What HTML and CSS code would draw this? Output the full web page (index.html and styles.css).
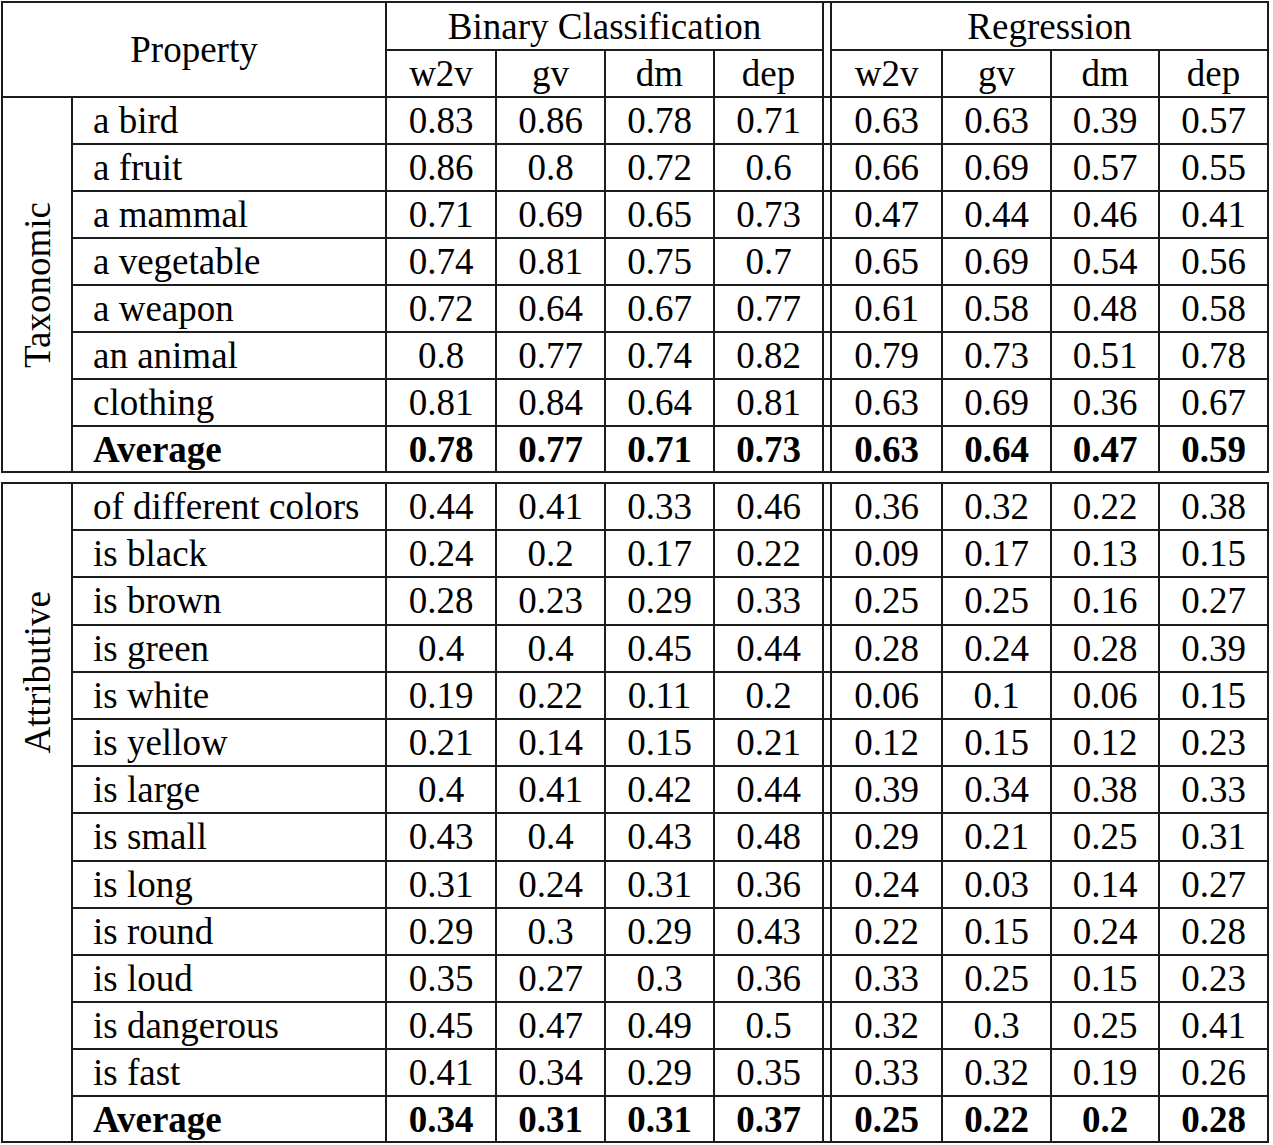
FILE: index.html
```html
<!DOCTYPE html>
<html lang="en">
<head>
<meta charset="utf-8">
<title>Property table</title>
<link rel="stylesheet" href="styles.css">
</head>
<body>
<div class="page">
<table class="tbl">
  <colgroup>
    <col class="c-grp"><col class="c-name">
    <col class="c-a1"><col class="c-a2"><col class="c-a3"><col class="c-a4">
    <col class="c-sep">
    <col class="c-b1"><col class="c-b2"><col class="c-b3"><col class="c-b4">
  </colgroup>
  <tr class="h1">
    <th colspan="2" rowspan="2">Property</th>
    <th colspan="4">Binary Classification</th>
    <td class="sep" rowspan="2"></td>
    <th colspan="4">Regression</th>
  </tr>
  <tr class="h2">
    <th>w2v</th><th>gv</th><th>dm</th><th>dep</th>
    <th>w2v</th><th>gv</th><th>dm</th><th>dep</th>
  </tr>
  <tr>
    <td class="grp" rowspan="8"><div class="vlabel">Taxonomic</div></td>
    <td class="name">a bird</td><td>0.83</td><td>0.86</td><td>0.78</td><td>0.71</td><td class="sep"></td><td>0.63</td><td>0.63</td><td>0.39</td><td>0.57</td>
  </tr>
  <tr><td class="name">a fruit</td><td>0.86</td><td>0.8</td><td>0.72</td><td>0.6</td><td class="sep"></td><td>0.66</td><td>0.69</td><td>0.57</td><td>0.55</td></tr>
  <tr><td class="name">a mammal</td><td>0.71</td><td>0.69</td><td>0.65</td><td>0.73</td><td class="sep"></td><td>0.47</td><td>0.44</td><td>0.46</td><td>0.41</td></tr>
  <tr><td class="name">a vegetable</td><td>0.74</td><td>0.81</td><td>0.75</td><td>0.7</td><td class="sep"></td><td>0.65</td><td>0.69</td><td>0.54</td><td>0.56</td></tr>
  <tr><td class="name">a weapon</td><td>0.72</td><td>0.64</td><td>0.67</td><td>0.77</td><td class="sep"></td><td>0.61</td><td>0.58</td><td>0.48</td><td>0.58</td></tr>
  <tr><td class="name">an animal</td><td>0.8</td><td>0.77</td><td>0.74</td><td>0.82</td><td class="sep"></td><td>0.79</td><td>0.73</td><td>0.51</td><td>0.78</td></tr>
  <tr><td class="name">clothing</td><td>0.81</td><td>0.84</td><td>0.64</td><td>0.81</td><td class="sep"></td><td>0.63</td><td>0.69</td><td>0.36</td><td>0.67</td></tr>
  <tr class="avg avg1"><td class="name">Average</td><td>0.78</td><td>0.77</td><td>0.71</td><td>0.73</td><td class="sep"></td><td>0.63</td><td>0.64</td><td>0.47</td><td>0.59</td></tr>
</table>

<table class="tbl second">
  <colgroup>
    <col class="c-grp"><col class="c-name">
    <col class="c-a1"><col class="c-a2"><col class="c-a3"><col class="c-a4">
    <col class="c-sep">
    <col class="c-b1"><col class="c-b2"><col class="c-b3"><col class="c-b4">
  </colgroup>
  <tr>
    <td class="grp top" rowspan="14"><div class="vbox"><div class="vlabel">Attributive</div></div></td>
    <td class="name">of different colors</td><td>0.44</td><td>0.41</td><td>0.33</td><td>0.46</td><td class="sep"></td><td>0.36</td><td>0.32</td><td>0.22</td><td>0.38</td>
  </tr>
  <tr><td class="name">is black</td><td>0.24</td><td>0.2</td><td>0.17</td><td>0.22</td><td class="sep"></td><td>0.09</td><td>0.17</td><td>0.13</td><td>0.15</td></tr>
  <tr><td class="name">is brown</td><td>0.28</td><td>0.23</td><td>0.29</td><td>0.33</td><td class="sep"></td><td>0.25</td><td>0.25</td><td>0.16</td><td>0.27</td></tr>
  <tr><td class="name">is green</td><td>0.4</td><td>0.4</td><td>0.45</td><td>0.44</td><td class="sep"></td><td>0.28</td><td>0.24</td><td>0.28</td><td>0.39</td></tr>
  <tr><td class="name">is white</td><td>0.19</td><td>0.22</td><td>0.11</td><td>0.2</td><td class="sep"></td><td>0.06</td><td>0.1</td><td>0.06</td><td>0.15</td></tr>
  <tr><td class="name">is yellow</td><td>0.21</td><td>0.14</td><td>0.15</td><td>0.21</td><td class="sep"></td><td>0.12</td><td>0.15</td><td>0.12</td><td>0.23</td></tr>
  <tr><td class="name">is large</td><td>0.4</td><td>0.41</td><td>0.42</td><td>0.44</td><td class="sep"></td><td>0.39</td><td>0.34</td><td>0.38</td><td>0.33</td></tr>
  <tr><td class="name">is small</td><td>0.43</td><td>0.4</td><td>0.43</td><td>0.48</td><td class="sep"></td><td>0.29</td><td>0.21</td><td>0.25</td><td>0.31</td></tr>
  <tr><td class="name">is long</td><td>0.31</td><td>0.24</td><td>0.31</td><td>0.36</td><td class="sep"></td><td>0.24</td><td>0.03</td><td>0.14</td><td>0.27</td></tr>
  <tr><td class="name">is round</td><td>0.29</td><td>0.3</td><td>0.29</td><td>0.43</td><td class="sep"></td><td>0.22</td><td>0.15</td><td>0.24</td><td>0.28</td></tr>
  <tr><td class="name">is loud</td><td>0.35</td><td>0.27</td><td>0.3</td><td>0.36</td><td class="sep"></td><td>0.33</td><td>0.25</td><td>0.15</td><td>0.23</td></tr>
  <tr><td class="name">is dangerous</td><td>0.45</td><td>0.47</td><td>0.49</td><td>0.5</td><td class="sep"></td><td>0.32</td><td>0.3</td><td>0.25</td><td>0.41</td></tr>
  <tr><td class="name">is fast</td><td>0.41</td><td>0.34</td><td>0.29</td><td>0.35</td><td class="sep"></td><td>0.33</td><td>0.32</td><td>0.19</td><td>0.26</td></tr>
  <tr class="avg avg2"><td class="name">Average</td><td>0.34</td><td>0.31</td><td>0.31</td><td>0.37</td><td class="sep"></td><td>0.25</td><td>0.22</td><td>0.2</td><td>0.28</td></tr>
</table>
</div>
</body>
</html>
```

FILE: styles.css
```css
html, body {
  margin: 0;
  padding: 0;
  background: #ffffff;
}

.page {
  padding: 1px 0 0 1px;
  font-family: "Liberation Serif", "Times New Roman", serif;
  font-size: 37px;
  color: #000;
}

.tbl {
  border-collapse: collapse;
  table-layout: fixed;
  width: 1266px;
}

.tbl.second {
  margin-top: 9px;
}

.c-grp { width: 70px; }
.c-name { width: 314px; }
.c-a1 { width: 110px; }
.c-a2 { width: 109px; }
.c-a3 { width: 109px; }
.c-a4 { width: 109px; }
.c-sep { width: 8px; }
.c-b1 { width: 111px; }
.c-b2 { width: 109px; }
.c-b3 { width: 108px; }
.c-b4 { width: 109px; }

.tbl th,
.tbl td {
  border: 2px solid #1c1c1c;
  padding: 0;
  text-align: center;
  vertical-align: middle;
  font-weight: normal;
  line-height: 1;
  white-space: nowrap;
  overflow: hidden;
}

.tbl tr {
  height: 47px;
}

.tbl tr.h1 {
  height: 48px;
}

.tbl tr.avg1 {
  height: 46px;
}

.tbl.second tr {
  height: 47.2px;
}

.tbl.second tr.avg2 {
  height: 46px;
}

.tbl td.name {
  text-align: left;
  padding-left: 20px;
}

.tbl tr.avg td {
  font-weight: bold;
}

.tbl td.sep {
  padding: 0;
}

.tbl td.grp {
  padding: 0;
}

.tbl td.grp.top {
  vertical-align: top;
}

.vbox {
  height: 376px;
  display: flex;
  align-items: center;
  justify-content: center;
}

.vlabel {
  writing-mode: vertical-rl;
  transform: rotate(180deg);
  margin: 0 auto;
}
```
